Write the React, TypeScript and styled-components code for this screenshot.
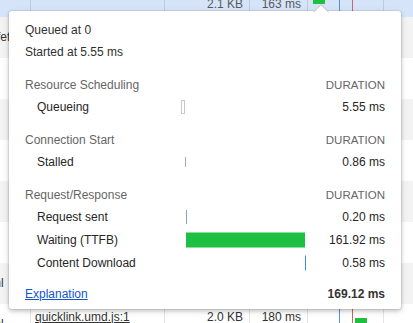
import React from 'react';
import styled, { createGlobalStyle, css } from 'styled-components';

const GlobalStyle = createGlobalStyle`
  html, body { margin: 0; padding: 0; background: #fff; }
  body {
    font-family: "Liberation Sans", Arial, Helvetica, sans-serif;
    font-size: 12px;
    color: #222;
    overflow: hidden;
  }
`;

const Stage = styled.div`
  position: relative;
  width: 413px;
  height: 323px;
  overflow: hidden;
  background: #fff;
`;

/* ---------- background network table ---------- */

const Table = styled.div`
  display: flex;
  flex-direction: column;
  margin-top: -24px;
`;

type Tone = 'selected' | 'grey' | 'white';
const rowBg: Record<Tone, string> = {
  selected: '#d6e4f9',
  grey: '#f3f3f3',
  white: '#ffffff',
};

const Row = styled.div<{ $tone: Tone }>`
  display: grid;
  grid-template-columns: 31px 134px 85px 58px 76px 1fr;
  height: 41px;
  background: ${(p) => rowBg[p.$tone]};
  color: #333;
`;

const Cell = styled.div<{ $align?: 'left' | 'right' }>`
  display: flex;
  flex-direction: column;
  justify-content: center;
  align-items: ${(p) => (p.$align === 'right' ? 'flex-end' : 'flex-start')};
  padding: ${(p) => (p.$align === 'right' ? '0 6px 0 0' : '0 0 0 4px')};
  border-right: 1px solid rgba(0, 0, 0, 0.1);
  overflow: hidden;
  white-space: nowrap;
  line-height: 15px;
`;

const TypeCell = styled(Cell)`
  padding: 0;
`;

const TypeText = styled.span<{ $indent: number }>`
  margin-left: ${(p) => p.$indent}px;
`;

const SubLine = styled.span`
  color: #5a5a5a;
`;

const InitiatorLink = styled.span`
  text-decoration: underline;
  color: #333;
`;

const WaterfallCell = styled.div`
  position: relative;
  border-right: 1px solid rgba(0, 0, 0, 0.1);
  background: linear-gradient(
    to right,
    transparent 31px,
    #5b8fdd 31px,
    #5b8fdd 32px,
    transparent 32px,
    transparent 44px,
    #c76868 44px,
    #c76868 45px,
    transparent 45px
  );
`;

const WaterBar = styled.div<{ $left: number; $width: number }>`
  position: absolute;
  left: ${(p) => p.$left}px;
  width: ${(p) => p.$width}px;
  top: 13.5px;
  height: 14px;
  background: #1ec13f;
`;

const EmptyCell = styled.div``;

/* ---------- timing popover ---------- */

const Popover = styled.div`
  position: absolute;
  left: 9px;
  top: 11px;
  width: 392px;
  box-sizing: border-box;
  padding: 8px 16px 4px;
  background: #fff;
  border-radius: 3px;
  box-shadow: 0 0 0 1px rgba(0, 0, 0, 0.06), 0 2px 4px rgba(0, 0, 0, 0.2),
    0 2px 8px rgba(0, 0, 0, 0.08);
`;

const Arrow = styled.svg`
  position: absolute;
  left: 304px;
  top: -7px;
  width: 16px;
  height: 8px;
  overflow: visible;
`;

const InfoLine = styled.div`
  height: 22px;
  line-height: 22px;
  color: #303030;
`;

const Section = styled.div`
  margin-top: 11px;
  display: flex;
  flex-direction: column;
`;

const SectionHeader = styled.div`
  display: flex;
  justify-content: space-between;
  align-items: center;
  height: 21px;
  color: #666;
`;

const DurationLabel = styled.span`
  font-size: 11.5px;
  color: #666;
`;

const TimingRow = styled.div`
  display: grid;
  grid-template-columns: 156px 126px 78px;
  align-items: center;
  height: 23px;
`;

const Label = styled.span`
  padding-left: 12px;
  color: #262626;
`;

const Track = styled.div`
  position: relative;
  height: 100%;
`;

type BarKind = 'queue' | 'stall' | 'sent' | 'wait' | 'download';

const barStyles: Record<BarKind, ReturnType<typeof css>> = {
  queue: css`
    height: 14px;
    background: #fff;
    border: 1px solid #c9c9c9;
  `,
  stall: css`
    height: 10px;
    background: #adadad;
  `,
  sent: css`
    height: 14px;
    background: #8aa0b8;
  `,
  wait: css`
    height: 15px;
    background: #1ec043;
  `,
  download: css`
    height: 15px;
    background: #3a8de0;
  `,
};

const Bar = styled.div<{ $kind: BarKind }>`
  position: absolute;
  top: 50%;
  transform: translateY(-50%);
  box-sizing: border-box;
  ${(p) => barStyles[p.$kind]}
`;

const Value = styled.span`
  text-align: right;
  color: #262626;
`;

const Footer = styled.div`
  margin-top: 9px;
  height: 22px;
  display: flex;
  justify-content: space-between;
  align-items: center;
`;

const Link = styled.a`
  color: #1155cc;
  text-decoration: underline;
  cursor: pointer;
`;

const Total = styled.span`
  font-weight: bold;
  color: #333;
`;

/* ---------- data ---------- */

type Phase = { label: string; kind: BarKind; start: number; dur: number };
type Group = { title: string; phases: Phase[] };

const TOTAL = 169.12;
const PX_PER_MS = 0.735;

const groups: Group[] = [
  {
    title: 'Resource Scheduling',
    phases: [{ label: 'Queueing', kind: 'queue', start: 0, dur: 5.55 }],
  },
  {
    title: 'Connection Start',
    phases: [{ label: 'Stalled', kind: 'stall', start: 5.55, dur: 0.86 }],
  },
  {
    title: 'Request/Response',
    phases: [
      { label: 'Request sent', kind: 'sent', start: 6.41, dur: 0.2 },
      { label: 'Waiting (TTFB)', kind: 'wait', start: 6.61, dur: 161.92 },
      { label: 'Content Download', kind: 'download', start: 168.53, dur: 0.58 },
    ],
  },
];

type NetRow = {
  tone: Tone;
  type?: string;
  indent?: number;
  initiator?: React.ReactNode;
  initiatorSub?: string;
  size?: [string, string];
  time?: [string, string];
  bar?: [number, number];
};

const netRows: NetRow[] = [
  {
    tone: 'selected',
    initiator: 'Other',
    size: ['2.1 KB', '2.1 KB'],
    time: ['163 ms', '163 ms'],
    bar: [5, 12],
  },
  { tone: 'grey', type: 'fetch', indent: -3 },
  { tone: 'white' },
  { tone: 'grey' },
  { tone: 'white' },
  { tone: 'grey' },
  { tone: 'white' },
  { tone: 'grey', type: 'html', indent: -19 },
  {
    tone: 'white',
    type: 'html',
    indent: -19,
    initiator: <InitiatorLink>quicklink.umd.js:1</InitiatorLink>,
    initiatorSub: 'Script',
    size: ['2.0 KB', '4.4 KB'],
    time: ['180 ms', '178 ms'],
    bar: [47, 12],
  },
];

const fmt = (n: number) => `${n.toFixed(2)} ms`;

export default function App() {
  return (
    <Stage>
      <GlobalStyle />
      <Table>
        {netRows.map((r, i) => (
          <Row key={i} $tone={r.tone}>
            <TypeCell>
              {r.type && <TypeText $indent={r.indent ?? 0}>{r.type}</TypeText>}
            </TypeCell>
            <Cell>
              {r.initiator && <span>{r.initiator}</span>}
              {r.initiatorSub && <SubLine>{r.initiatorSub}</SubLine>}
            </Cell>
            <Cell $align="right">
              {r.size && (
                <>
                  <span>{r.size[0]}</span>
                  <SubLine>{r.size[1]}</SubLine>
                </>
              )}
            </Cell>
            <Cell $align="right">
              {r.time && (
                <>
                  <span>{r.time[0]}</span>
                  <SubLine>{r.time[1]}</SubLine>
                </>
              )}
            </Cell>
            <WaterfallCell>
              {r.bar && <WaterBar $left={r.bar[0]} $width={r.bar[1]} />}
            </WaterfallCell>
            <EmptyCell />
          </Row>
        ))}
      </Table>

      <Popover>
        <Arrow viewBox="0 0 16 8">
          <path d="M0 8 L8 0.5 L16 8 Z" fill="#fff" />
          <path d="M0.5 8 L8 0.7 L15.5 8" fill="none" stroke="#b8b8b8" strokeWidth="1" />
        </Arrow>
        <InfoLine>Queued at 0</InfoLine>
        <InfoLine>Started at 5.55 ms</InfoLine>
        {groups.map((g) => (
          <Section key={g.title}>
            <SectionHeader>
              <span>{g.title}</span>
              <DurationLabel>DURATION</DurationLabel>
            </SectionHeader>
            {g.phases.map((p) => (
              <TimingRow key={p.label}>
                <Label>{p.label}</Label>
                <Track>
                  <Bar
                    $kind={p.kind}
                    style={{
                      left: Math.round(p.start * PX_PER_MS),
                      width: Math.max(1, Math.round(p.dur * PX_PER_MS)),
                    }}
                  />
                </Track>
                <Value>{fmt(p.dur)}</Value>
              </TimingRow>
            ))}
          </Section>
        ))}
        <Footer>
          <Link>Explanation</Link>
          <Total>{fmt(TOTAL)}</Total>
        </Footer>
      </Popover>
    </Stage>
  );
}
